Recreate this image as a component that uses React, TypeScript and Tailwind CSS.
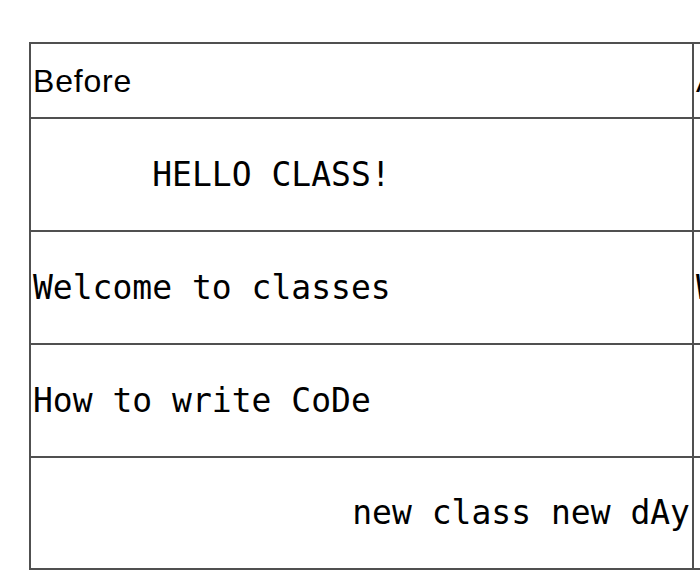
const rows = [
  { before: '      HELLO CLASS!', after: 'hello class!', align: 'text-left', afterAlign: 'text-center', h: 'h-[113px]' },
  { before: 'Welcome to classes', after: 'WELCOME TO CLASSES', align: 'text-left', afterAlign: 'text-left', h: 'h-[113px]' },
  { before: 'How to write CoDe', after: 'How To Write CoDe', align: 'text-left', afterAlign: 'text-center', h: 'h-[113px]' },
  { before: 'new class new dAy', after: 'New Class New DAy', align: 'text-right', afterAlign: 'text-right', h: 'h-[112px]' },
]

export default function App() {
  return (
    <div className="w-[700px] h-[571px] overflow-hidden bg-white">
      <div className="pt-[42px] pl-[29px]">
        <table className="table-fixed border-collapse w-[1326px]">
          <colgroup>
            <col className="w-[663px]" />
            <col className="w-[663px]" />
          </colgroup>
          <thead>
            <tr className="h-[75px]">
              <th className="border-2 border-[#505050] px-[2px] text-left font-normal text-[32px] tracking-[0.8px] text-black font-['Liberation_Sans',Arial,sans-serif]">
                Before
              </th>
              <th className="border-2 border-[#505050] px-[2px] text-left font-normal text-[32px] tracking-[0.8px] text-black font-['Liberation_Sans',Arial,sans-serif]">
                After
              </th>
            </tr>
          </thead>
          <tbody>
            {rows.map((row, i) => (
              <tr key={i} className={row.h}>
                <td
                  className={`border-2 border-[#505050] px-[2px] whitespace-pre text-[33px] text-black font-['DejaVu_Sans_Mono',monospace] ${row.align}`}
                >
                  {row.before}
                </td>
                <td
                  className={`border-2 border-[#505050] px-[2px] whitespace-pre text-[33px] text-black font-['DejaVu_Sans_Mono',monospace] ${row.afterAlign}`}
                >
                  {row.after}
                </td>
              </tr>
            ))}
          </tbody>
        </table>
      </div>
    </div>
  )
}
